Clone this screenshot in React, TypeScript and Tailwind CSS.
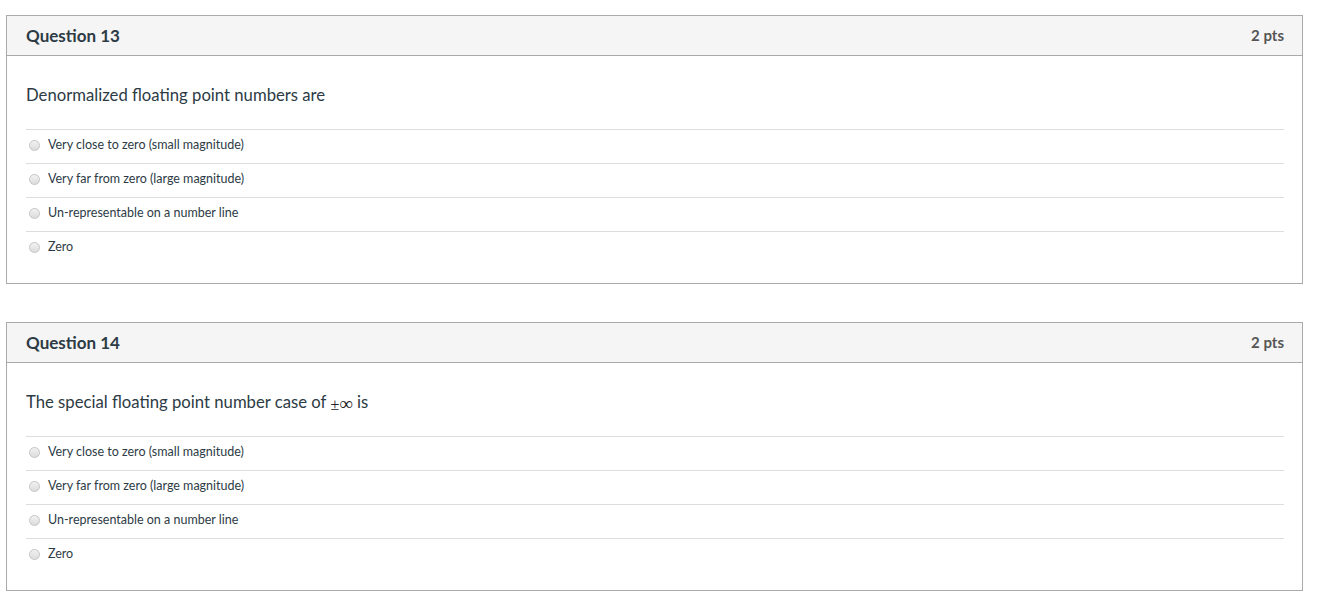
const options = [
  "Very close to zero (small magnitude)",
  "Very far from zero (large magnitude)",
  "Un-representable on a number line",
  "Zero",
];

function Radio() {
  return (
    <span className="inline-block w-[11px] h-[11px] rounded-full border border-[#c4c4c4] bg-gradient-to-b from-[#f2f2f2] to-[#dcdcdc] shrink-0" />
  );
}

function QuestionCard({ num, children }: { num: number; children: React.ReactNode }) {
  return (
    <div className="w-[1297px] border border-[#aaaaaa] bg-white">
      <div className="h-[40px] flex items-center justify-between pl-[19px] pr-[18px] bg-[#f5f5f5] border-b border-[#aaaaaa]">
        <span className="text-[17px] font-bold text-[#2d3b45]">Question {num}</span>
        <span className="text-[15px] font-bold text-[#555555]">2 pts</span>
      </div>
      <div className="pl-[19px] pr-[18px] pt-[27px] pb-[18px]">
        <div className="text-[16.7px] leading-[24px] text-[#2d3b45] h-[46px]">{children}</div>
        <div>
          {options.map((o) => (
            <div key={o} className="h-[34px] flex items-center gap-[8px] pl-[3px] pb-[3px] border-t border-[#dddddd]">
              <Radio />
              <span className="text-[12.5px] text-[#2d3b45]">{o}</span>
            </div>
          ))}
        </div>
      </div>
    </div>
  );
}

export default function App() {
  return (
    <div className="min-h-screen bg-white pt-[15px] pl-[6px] flex flex-col gap-[38px]" style={{ fontFamily: "Lato, 'Open Sans', sans-serif" }}>
      <QuestionCard num={13}>Denormalized floating point numbers are</QuestionCard>
      <QuestionCard num={14}>
        The special floating point number case of{" "}
        <span className="inline-block translate-y-[2px] text-[19px] text-[#222]" style={{ fontFamily: "'Liberation Serif', serif" }}>
          <span className="text-[16px]">±</span>∞
        </span>{" "}
        is
      </QuestionCard>
    </div>
  );
}
